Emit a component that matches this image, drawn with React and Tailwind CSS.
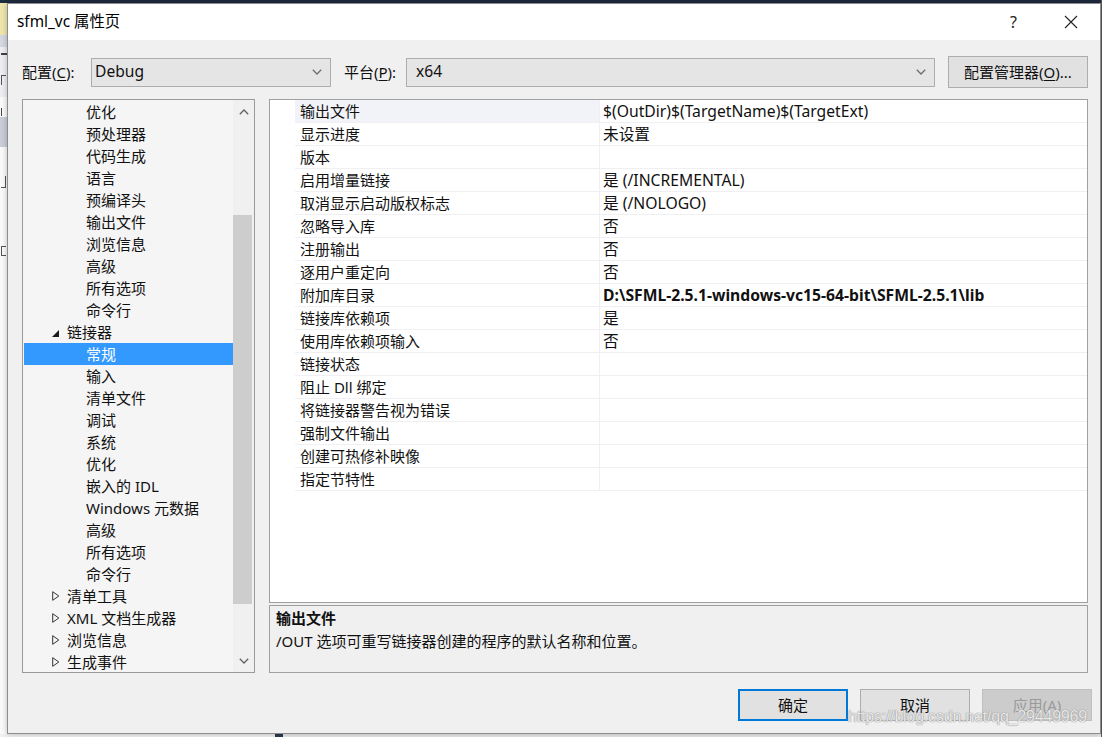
const treeItems = [
  { t: '优化', l: 2 },
  { t: '预处理器', l: 2 },
  { t: '代码生成', l: 2 },
  { t: '语言', l: 2 },
  { t: '预编译头', l: 2 },
  { t: '输出文件', l: 2 },
  { t: '浏览信息', l: 2 },
  { t: '高级', l: 2 },
  { t: '所有选项', l: 2 },
  { t: '命令行', l: 2 },
  { t: '链接器', l: 1, open: true },
  { t: '常规', l: 2, sel: true },
  { t: '输入', l: 2 },
  { t: '清单文件', l: 2 },
  { t: '调试', l: 2 },
  { t: '系统', l: 2 },
  { t: '优化', l: 2 },
  { t: '嵌入的 IDL', l: 2 },
  { t: 'Windows 元数据', l: 2 },
  { t: '高级', l: 2 },
  { t: '所有选项', l: 2 },
  { t: '命令行', l: 2 },
  { t: '清单工具', l: 1 },
  { t: 'XML 文档生成器', l: 1 },
  { t: '浏览信息', l: 1 },
  { t: '生成事件', l: 1 },
];

const props = [
  ['输出文件', '$(OutDir)$(TargetName)$(TargetExt)'],
  ['显示进度', '未设置'],
  ['版本', ''],
  ['启用增量链接', '是 (/INCREMENTAL)'],
  ['取消显示启动版权标志', '是 (/NOLOGO)'],
  ['忽略导入库', '否'],
  ['注册输出', '否'],
  ['逐用户重定向', '否'],
  ['附加库目录', 'D:\\SFML-2.5.1-windows-vc15-64-bit\\SFML-2.5.1\\lib', true],
  ['链接库依赖项', '是'],
  ['使用库依赖项输入', '否'],
  ['链接状态', ''],
  ['阻止 Dll 绑定', ''],
  ['将链接器警告视为错误', ''],
  ['强制文件输出', ''],
  ['创建可热修补映像', ''],
  ['指定节特性', ''],
];

function Chevron({ up = false, color = '#5a5a5a' }) {
  return (
    <svg width="10" height="6" viewBox="0 0 10 6" className="block">
      <polyline
        points={up ? '0.8,5.2 5,1 9.2,5.2' : '0.8,0.8 5,5 9.2,0.8'}
        fill="none"
        stroke={color}
        strokeWidth="1.3"
      />
    </svg>
  );
}

function Select({ value, w, pl }) {
  return (
    <div
      className={`h-[29px] ${w} ${pl} bg-[#e5e5e5] border border-[#adadad] flex items-center justify-between pr-[8px]`}
    >
      <span className="text-[15.6px]">{value}</span>
      <Chevron color="#6d6d6d" />
    </div>
  );
}

export default function App() {
  return (
    <div className="relative w-[1102px] h-[737px] overflow-hidden bg-[#e7e8ea] font-['Noto_Sans','Noto_Sans_CJK_SC',sans-serif] text-[15px] text-[#111] leading-none">
      {/* desktop / VS background behind dialog */}
      <div className="absolute left-0 top-0 w-full h-[3px] bg-[#1e2b3e]" />
      <div className="absolute left-0 top-[3px] w-[8px] h-[32px] bg-[#efe6ae]" />
      <div className="absolute left-0 top-[35px] w-[8px] h-[12px] bg-[#d4d8e2]" />
      <div className="absolute left-0 top-[47px] w-[8px] h-[50px] bg-[#eeeff3]" />
      <div className="absolute left-0 top-[97px] w-[8px] h-[640px] bg-[#fafafa]" />
      <div className="absolute left-0 top-[117px] w-[8px] h-[30px] bg-[#c9cdd8]" />
      <div className="absolute left-[1px] top-[53px] w-[6px] h-[2px] bg-[#444]" />
      <div className="absolute left-[1px] top-[75px] w-[5px] h-[10px] border-l border-t border-[#555]" />
      <div className="absolute left-[1px] top-[108px] w-[5px] h-[8px] border-l border-[#444]" />
      <div className="absolute left-[1px] top-[176px] w-[5px] h-[12px] border-r border-b border-[#555]" />
      <div className="absolute left-[1px] top-[246px] w-[5px] h-[10px] border-l border-y border-[#555]" />
      <div className="absolute left-0 top-[734px] w-[275px] h-[3px] bg-[#f0f0f0]" />
      <div className="absolute left-[275px] top-[731px] w-[8px] h-[6px] bg-[#2b3853]" />
      <div className="absolute left-[1101px] top-0 w-[1px] h-full bg-[#5a5a5a]" />

      {/* dialog */}
      <div className="absolute left-[7px] top-[3px] w-[1094px] h-[731px] border border-[#8d8d8d] bg-[#f0f0f0] flex flex-col shadow-[0_0_6px_rgba(0,0,0,0.25)]">
        {/* title bar */}
        <div className="h-[36px] bg-white flex items-center pl-[9px] pr-[14px]">
          <span className="text-[15.4px] text-black">sfml_vc 属性页</span>
          <div className="ml-auto flex items-center">
            <span className="text-[16px] text-[#222] mr-[47px]">?</span>
            <svg width="14" height="14" viewBox="0 0 14 14" className="mr-[8px]">
              <path d="M1 1 L13 13 M13 1 L1 13" stroke="#222" strokeWidth="1.1" />
            </svg>
          </div>
        </div>

        {/* body */}
        <div className="flex-1 flex flex-col pl-[14px] pr-[11px] pt-[16px]">
          {/* config row */}
          <div className="h-[32px] flex items-center">
            <span className="w-[69px]">
              配置(<span className="underline underline-offset-2">C</span>):
            </span>
            <Select value="Debug" w="w-[240px]" pl="pl-[3px]" />
            <span className="ml-[13px] w-[62px]">
              平台(<span className="underline underline-offset-2">P</span>):
            </span>
            <Select value="x64" w="w-[529px]" pl="pl-[9px]" />
            <div className="ml-[13px] w-[140px] h-[32px] bg-[#e1e1e1] border border-[#adadad] flex items-center justify-center">
              配置管理器(<span className="underline underline-offset-2">O</span>)...
            </div>
          </div>

          {/* main area */}
          <div className="mt-[11px] h-[574px] flex gap-[14px]">
            {/* tree */}
            <div className="w-[233px] h-full border border-[#9a9a9a] bg-[#f5f5f5] flex overflow-hidden">
              <div className="flex-1 pt-[1px] pl-[1px] overflow-hidden">
                {treeItems.map((it, i) => (
                  <div
                    key={i}
                    className={`h-[22px] flex items-center ${
                      it.sel ? 'bg-[#3399ff] text-white' : ''
                    } ${it.l === 2 ? 'pl-[62px]' : 'pl-[27px]'}`}
                  >
                    {it.l === 1 && (
                      <span className="w-[16px] flex items-center">
                        {it.open ? (
                          <svg width="7" height="7" viewBox="0 0 7 7" className="mt-[2px] ml-[1px]">
                            <polygon points="7,0 7,7 0,7" fill="#1a1a1a" />
                          </svg>
                        ) : (
                          <svg width="8" height="10" viewBox="0 0 8 10" className="ml-[1px]">
                            <polygon points="0.7,0.7 6.8,5 0.7,9.3" fill="none" stroke="#333" strokeWidth="1" />
                          </svg>
                        )}
                      </span>
                    )}
                    <span>{it.t}</span>
                  </div>
                ))}
              </div>
              {/* scrollbar */}
              <div className="w-[21px] h-full bg-[#f0f0f0] flex flex-col">
                <div className="h-[23px] flex items-center justify-center">
                  <Chevron up color="#606060" />
                </div>
                <div className="flex-1">
                  <div className="mt-[92px] mr-[2px] h-[389px] bg-[#cdcdcd]" />
                </div>
                <div className="h-[22px] flex items-center justify-center pb-[1px]">
                  <Chevron color="#606060" />
                </div>
              </div>
            </div>

            {/* right side */}
            <div className="w-[819px] h-full flex flex-col">
              <div className="h-[504px] border border-[#a0a0a0] bg-white overflow-hidden">
                {props.map(([name, val, bold], i) => (
                  <div key={i} className="h-[23px] flex">
                    <div className="w-[25px] shrink-0" />
                    <div
                      className={`w-[305px] shrink-0 border-b border-r border-[#f0f0f2] flex items-center pl-[5px] pt-[1px] ${
                        i === 0 ? 'bg-[#f1f3f8]' : ''
                      }`}
                    >
                      {name}
                    </div>
                    <div
                      className={`flex-1 border-b border-[#f0f0f2] flex items-center pl-[3px] pt-[1px] text-[15.7px] ${
                        bold ? 'font-bold' : ''
                      }`}
                    >
                      {val}
                    </div>
                  </div>
                ))}
              </div>
              <div className="mt-[2px] h-[68px] border border-[#a0a0a0] bg-[#f0f0f0] px-[6px] pt-[1px] leading-[23px]">
                <div className="font-bold">输出文件</div>
                <div>/OUT 选项可重写链接器创建的程序的默认名称和位置。</div>
              </div>
            </div>
          </div>

          {/* buttons */}
          <div className="mt-[16px] h-[32px] flex justify-end gap-[12px] mr-[-3px]">
            <div className="w-[110px] h-[32px] bg-[#e1e1e1] border-2 border-[#0078d7] flex items-center justify-center">
              确定
            </div>
            <div className="w-[110px] h-[32px] bg-[#e1e1e1] border border-[#adadad] flex items-center justify-center">
              取消
            </div>
            <div className="w-[110px] h-[32px] bg-[#cccccc] border border-[#bfbfbf] flex items-center justify-center text-[#9a9a9a]">
              应用(A)
            </div>
          </div>
        </div>
      </div>

      {/* watermark */}
      <div className="absolute left-[848px] top-[709px] font-['Liberation_Sans',sans-serif] text-[16px] tracking-[-0.2px] text-white/80 [text-shadow:0_0_1px_#8a8a8a,0_0_1px_#8a8a8a]">
        https://blog.csdn.net/qq_29449969
      </div>
    </div>
  );
}
